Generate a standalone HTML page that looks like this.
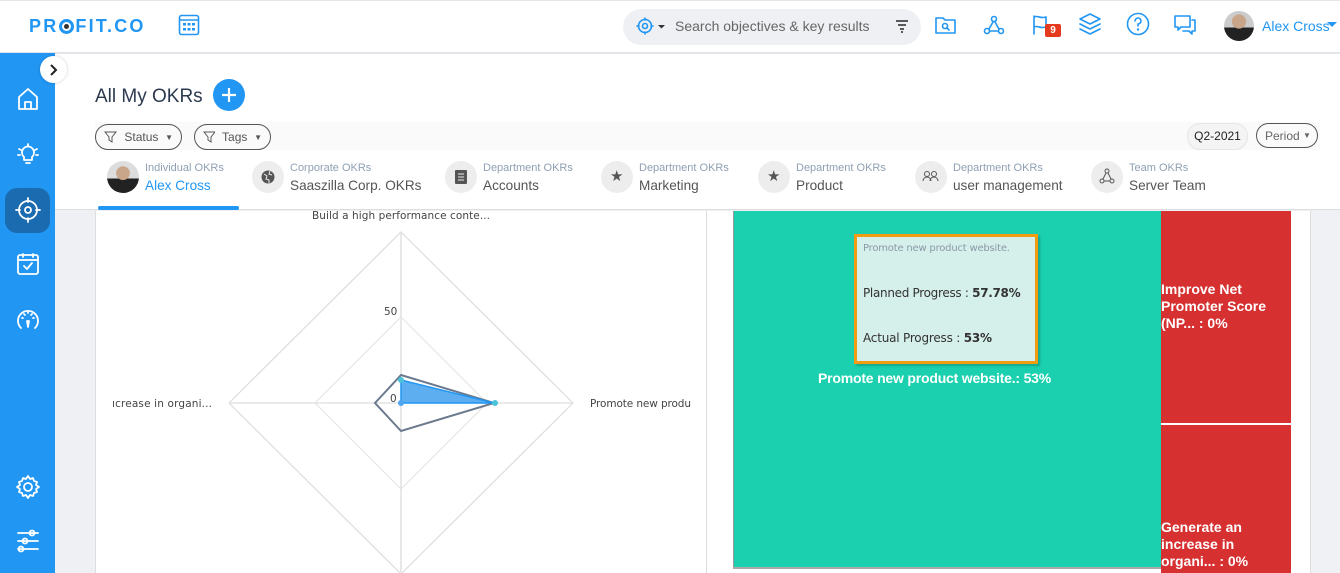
<!DOCTYPE html>
<html><head><meta charset="utf-8"><style>
*{box-sizing:border-box;margin:0;padding:0}
body{width:1340px;height:573px;overflow:hidden;font-family:"Liberation Sans",sans-serif;background:#eef0f4;position:relative}
.abs{position:absolute}
.hdr{left:0;top:0;width:1340px;height:53px;background:#fff;border-bottom:1px solid #e2e4ea;box-shadow:0 2px 4px rgba(0,0,0,.06);border-top:1px solid #e6e6e6}
.side{left:0;top:53px;width:55px;height:520px;background:#2196f3}
.ic{stroke:#fff;fill:none;stroke-width:1.8;stroke-linecap:round;stroke-linejoin:round}
.bi{stroke:#2196f3;fill:none;stroke-width:1.6;stroke-linecap:round;stroke-linejoin:round}
.pill{border:1px solid #555;border-radius:14px;height:26px;font-size:12px;color:#555;display:flex;align-items:center;padding:0 8px}
.tab{top:160px;height:40px}
.tab .c{position:absolute;left:0;top:1px;width:32px;height:32px;border-radius:50%;background:#ededed}
.tab .s{position:absolute;left:38px;top:2px;font-size:11px;color:#8fa0b3;white-space:nowrap}
.tab .m{position:absolute;left:38px;top:18px;font-size:13.6px;color:#555;white-space:nowrap}
.tl{color:#fff;font-weight:bold;font-size:14px;line-height:17px}
</style></head><body>
<div class="abs hdr"></div>
<div class="abs" style="left:29px;top:16px;font-size:18px;font-weight:bold;letter-spacing:2.2px;color:#2196f3">PR<span style="display:inline-block;width:15px;height:15px;border:3px solid #2196f3;border-radius:50%;vertical-align:-2px;position:relative;margin:0 1px"><span style="position:absolute;left:2px;top:2px;width:5px;height:5px;background:#333;border-radius:50%"></span></span>FIT.CO</div>
<svg class="abs" style="left:178px;top:14px" width="22" height="22"><rect x="1.5" y="1.5" width="19" height="19" rx="2" class="bi"/><line x1="2" y1="6" x2="20" y2="6" class="bi"/><g fill="#2196f3"><rect x="5" y="9" width="3" height="2.5"/><rect x="9.5" y="9" width="3" height="2.5"/><rect x="14" y="9" width="3" height="2.5"/><rect x="5" y="14" width="3" height="2.5"/><rect x="9.5" y="14" width="3" height="2.5"/><rect x="14" y="14" width="3" height="2.5"/></g></svg>
<div class="abs" style="left:623px;top:9px;width:298px;height:36px;background:#eef0f4;border-radius:18px"></div>
<svg class="abs" style="left:636px;top:17px" width="30" height="20"><circle cx="9" cy="9" r="6.5" class="bi"/><circle cx="9" cy="9" r="2.5" class="bi"/><path d="M9 1v2M9 15v2M1 9h2M15 9h2" class="bi"/><path d="M22 8l3.5 3.5L29 8z" fill="#333"/></svg>
<div class="abs" style="left:675px;top:18px;font-size:14px;color:#666">Search objectives &amp; key results</div>
<svg class="abs" style="left:894px;top:18px" width="16" height="16"><path d="M2 3h12M4 7h8M6 11h4M7 14h2" stroke="#444" stroke-width="1.8"/></svg>
<svg class="abs" style="left:934px;top:14px" width="24" height="22"><path d="M2 4h7l2 2h10v13H2z" class="bi"/><circle cx="11" cy="12" r="2.5" class="bi"/><path d="M13 14l2 2" class="bi"/></svg>
<svg class="abs" style="left:983px;top:14px" width="22" height="22"><circle cx="11" cy="5" r="2.5" class="bi"/><circle cx="4" cy="17" r="2.5" class="bi"/><circle cx="18" cy="17" r="2.5" class="bi"/><path d="M10 8l-4 7M12 8l4 7M7 17h8" class="bi"/></svg>
<svg class="abs" style="left:1031px;top:14px" width="20" height="22"><path d="M3 2v18M3 3c4-2 6 2 12 0v10c-6 2-8-2-12 0" class="bi"/></svg>
<div class="abs" style="left:1045px;top:24px;width:16px;height:13px;background:#e53a1e;border-radius:2px;color:#fff;font-size:10px;font-weight:bold;text-align:center;line-height:13px">9</div>
<svg class="abs" style="left:1078px;top:12px" width="24" height="24"><path d="M12 2l10 5-10 5L2 7z M2 12l10 5 10-5 M2 17l10 5 10-5" class="bi" stroke-width="2"/></svg>
<svg class="abs" style="left:1126px;top:12px" width="24" height="24"><circle cx="12" cy="12" r="10.5" class="bi" stroke-width="2"/><path d="M9 9a3 3 0 1 1 3 3v2" class="bi" stroke-width="2"/><circle cx="12" cy="17.5" r="1.2" fill="#2196f3"/></svg>
<svg class="abs" style="left:1173px;top:14px" width="24" height="22"><path d="M2 2h15v11H8l-3 3v-3H2z M19 6h3v11h-3v3l-3-3h-6" class="bi"/></svg>
<div class="abs" style="left:1224px;top:11px;width:30px;height:30px;border-radius:50%;background:radial-gradient(circle at 50% 35%,#c9a58a 0 28%,transparent 30%),linear-gradient(#ccc 0 55%,#222 55%)"></div>
<div class="abs" style="left:1262px;top:18px;font-size:14px;color:#2196f3">Alex Cross</div>
<svg class="abs" style="left:1327px;top:22px" width="10" height="6"><path d="M0 0h10L5 5z" fill="#2196f3"/></svg>

<div class="abs side"></div>
<div class="abs" style="left:5px;top:188px;width:45px;height:45px;background:#1a6bb0;border-radius:12px"></div>
<svg class="abs" style="left:16px;top:86px" width="24" height="26"><path d="M3 11L12 3l9 8v12H3z M9 23v-7h6v7" class="ic"/></svg>
<svg class="abs" style="left:16px;top:142px" width="24" height="26"><path d="M8 15a6 6 0 1 1 8 0v3H8z M10 21h4M12 2v2M3 7l2 1M21 7l-2 1M2 13h2M20 13h2" class="ic"/></svg>
<svg class="abs" style="left:14px;top:196px" width="28" height="28"><circle cx="14" cy="14" r="9" class="ic"/><circle cx="14" cy="14" r="3" class="ic"/><path d="M14 2v4M14 22v4M2 14h4M22 14h4" class="ic"/></svg>
<svg class="abs" style="left:16px;top:252px" width="24" height="24"><rect x="2" y="3" width="20" height="19" rx="2" class="ic"/><path d="M2 8h20M7 2v3M17 2v3M8 14l3 3 5-6" class="ic"/></svg>
<svg class="abs" style="left:15px;top:306px" width="26" height="28"><path d="M6 22a10 10 0 1 1 14 0" class="ic"/><path d="M13 21l-1-6h2z" class="ic"/><path d="M7 12h1M13 6v1M19 12h-1M9 8l1 1M17 8l-1 1" class="ic"/></svg>
<svg class="abs" style="left:15px;top:474px" width="26" height="26"><circle cx="13" cy="13" r="4" class="ic"/><path d="M13 2l2 3 3-1 1 3 3 1-1 3 3 2-3 2 1 3-3 1-1 3-3-1-2 3-2-3-3 1-1-3-3-1 1-3-3-2 3-2-1-3 3-1 1-3 3 1z" class="ic"/></svg>
<svg class="abs" style="left:15px;top:528px" width="26" height="26"><path d="M3 5h20M3 13h20M3 21h20" class="ic"/><circle cx="17" cy="5" r="2.5" fill="#2196f3" class="ic"/><circle cx="10" cy="13" r="2.5" fill="#2196f3" class="ic"/><circle cx="6" cy="21" r="2.5" fill="#2196f3" class="ic"/></svg>

<div class="abs" style="left:55px;top:54px;width:1285px;height:156px;background:#fff;border-bottom:1px solid #ddd"></div>
<div class="abs" style="left:95px;top:122px;width:1225px;height:28px;background:#fafafa"></div>
<div class="abs" style="left:40px;top:56px;width:27px;height:27px;border-radius:50%;background:#fff;box-shadow:0 0 3px rgba(0,0,0,.2)"></div>
<svg class="abs" style="left:49px;top:64px" width="10" height="12"><path d="M2 1l5 5-5 5" stroke="#222" stroke-width="2" fill="none"/></svg>
<div class="abs" style="left:95px;top:86px;font-size:19px;color:#2c3a4f">All My OKRs</div>
<div class="abs" style="left:213px;top:79px;width:32px;height:32px;border-radius:50%;background:#2196f3"></div>
<svg class="abs" style="left:219px;top:85px" width="20" height="20"><path d="M10 3v14M3 10h14" stroke="#fff" stroke-width="2.2"/></svg>
<div class="abs pill" style="left:95px;top:124px;width:87px"><svg width="14" height="12"><path d="M1 1h11L8 6v5L5 9V6z" fill="none" stroke="#555"/></svg>&nbsp;&nbsp;Status&nbsp;&nbsp;<span style="font-size:8px">▼</span></div>
<div class="abs pill" style="left:194px;top:124px;width:77px"><svg width="14" height="12"><path d="M1 1h11L8 6v5L5 9V6z" fill="none" stroke="#555"/></svg>&nbsp;&nbsp;Tags&nbsp;&nbsp;<span style="font-size:8px">▼</span></div>
<div class="abs" style="left:1187px;top:123px;width:61px;height:27px;border-radius:13px;background:#f4f4f4;border:1px solid #e5e5e5;font-size:12px;color:#222;text-align:center;line-height:25px">Q2-2021</div>
<div class="abs pill" style="left:1256px;top:123px;width:62px;height:25px;color:#666">Period&nbsp;<span style="font-size:8px">▼</span></div>

<div class="abs tab" style="left:107px"><div class="c" style="background:radial-gradient(circle at 50% 38%,#c9a58a 0 26%,transparent 28%),linear-gradient(#ddd 0 55%,#222 55%)"></div><div class="s">Individual OKRs</div><div class="m" style="color:#2196f3">Alex Cross</div></div>
<div class="abs" style="left:98px;top:206px;width:141px;height:4px;background:#2196f3;border-radius:2px"></div>
<div class="abs tab" style="left:252px"><div class="c"></div><svg class="abs" style="left:9px;top:10px" width="14" height="14"><circle cx="7" cy="7" r="6.5" fill="#555"/><path d="M3 4l3 2-1 3 3 1v3M9 1l-1 3 3 1" stroke="#ededed" fill="none"/></svg><div class="s">Corporate OKRs</div><div class="m">Saaszilla Corp. OKRs</div></div>
<div class="abs tab" style="left:445px"><div class="c"></div><svg class="abs" style="left:10px;top:10px" width="12" height="14"><rect width="12" height="14" rx="1" fill="#555"/><path d="M3 4h6M3 7h6M3 10h6" stroke="#ededed"/></svg><div class="s">Department OKRs</div><div class="m">Accounts</div></div>
<div class="abs tab" style="left:601px"><div class="c"></div><div class="abs" style="left:9px;top:7px;font-size:15px;color:#555">★</div><div class="s">Department OKRs</div><div class="m">Marketing</div></div>
<div class="abs tab" style="left:758px"><div class="c"></div><div class="abs" style="left:9px;top:7px;font-size:15px;color:#555">★</div><div class="s">Department OKRs</div><div class="m">Product</div></div>
<div class="abs tab" style="left:915px"><div class="c"></div><svg class="abs" style="left:7px;top:10px" width="18" height="12"><circle cx="5" cy="4" r="2.5" fill="none" stroke="#555"/><circle cx="12" cy="4" r="2.5" fill="none" stroke="#555"/><path d="M1 11a4 4 0 0 1 8 0M8 11a4 4 0 0 1 8 0" fill="none" stroke="#555"/></svg><div class="s">Department OKRs</div><div class="m">user management</div></div>
<div class="abs tab" style="left:1091px"><div class="c"></div><svg class="abs" style="left:8px;top:8px" width="16" height="16"><circle cx="8" cy="3" r="2" fill="none" stroke="#555"/><circle cx="3" cy="13" r="2" fill="none" stroke="#555"/><circle cx="13" cy="13" r="2" fill="none" stroke="#555"/><path d="M7 5l-3 6M9 5l3 6M5 13h6" stroke="#555" fill="none"/></svg><div class="s">Team OKRs</div><div class="m">Server Team</div></div>

<div class="abs" style="left:95px;top:211px;width:612px;height:362px;background:#fff;border-left:1px solid #ddd;border-right:1px solid #ddd"></div>
<div class="abs" style="left:707px;top:211px;width:603px;height:362px;background:#fff"></div>
<svg class="abs" style="left:95px;top:211px" width="612" height="362" font-family="DejaVu Sans,sans-serif" font-size="10.5" fill="#444">
<g fill="none" stroke="#ddd" stroke-width="1.2"><path d="M306 21L478 192 306 363 134 192z"/><path d="M306 106L392 192 306 278 220 192z" stroke="#e6e6e6"/><path d="M306 21V362M134 192H478" stroke="#e3e3e3" stroke-width="1.6"/></g>
<path d="M306 164L399 192 306 220 280 192z" fill="none" stroke="#6b7a8f" stroke-width="2"/>
<path d="M306 169L399 192 306 192z" fill="#4ba5f0" stroke="#2196f3" stroke-width="1.5" fill-opacity=".9"/>
<circle cx="306" cy="169" r="3" fill="#4cc3d9"/><circle cx="400" cy="192" r="3" fill="#4cc3d9"/><circle cx="306" cy="192" r="3" fill="#4ba5f0"/>
<text x="217" y="8" textLength="178">Build a high performance conte...</text>
<text x="289" y="104">50</text><text x="295" y="191">0</text>
<text x="17" y="196" textLength="100">ıcrease in organi...</text>
<text x="495" y="196" textLength="101">Promote new produ</text>
</svg>
<div class="abs" style="left:733px;top:211px;width:428px;height:358px;background:#1bd0ae;border-left:1px solid #999"></div>
<div class="abs" style="left:733px;top:567px;width:428px;height:2px;background:#aaa"></div>
<div class="abs" style="left:1161px;top:211px;width:130px;height:212px;background:#d63031"></div>
<div class="abs" style="left:1161px;top:425px;width:130px;height:148px;background:#d63031"></div>
<div class="abs tl" style="left:1161px;top:281px">Improve Net<br>Promoter Score<br>(NP... : 0%</div>
<div class="abs tl" style="left:1161px;top:519px">Generate an<br>increase in<br>organi... : 0%</div>
<div class="abs tl" style="left:818px;top:370px;font-size:14px;letter-spacing:-0.2px">Promote new product website.: 53%</div>
<div class="abs" style="left:854px;top:234px;width:184px;height:130px;background:#d5efea;border:3px solid #f39c12;box-shadow:2px 2px 2px rgba(0,0,0,.2);font-family:'DejaVu Sans',sans-serif;color:#333">
<div style="position:absolute;left:6px;top:6px;font-size:10px;color:#8a9aa8;white-space:nowrap;letter-spacing:-0.2px">Promote new product website.</div>
<div style="position:absolute;left:6px;top:49px;font-size:12px;white-space:nowrap;letter-spacing:-0.3px">Planned Progress : <b>57.78%</b></div>
<div style="position:absolute;left:6px;top:94px;font-size:12px;white-space:nowrap;letter-spacing:-0.2px">Actual Progress : <b>53%</b></div>
</div>
<div class="abs" style="left:1310px;top:211px;width:30px;height:362px;background:#f0f1f5;border-left:1px solid #ddd"></div>
</body></html>
